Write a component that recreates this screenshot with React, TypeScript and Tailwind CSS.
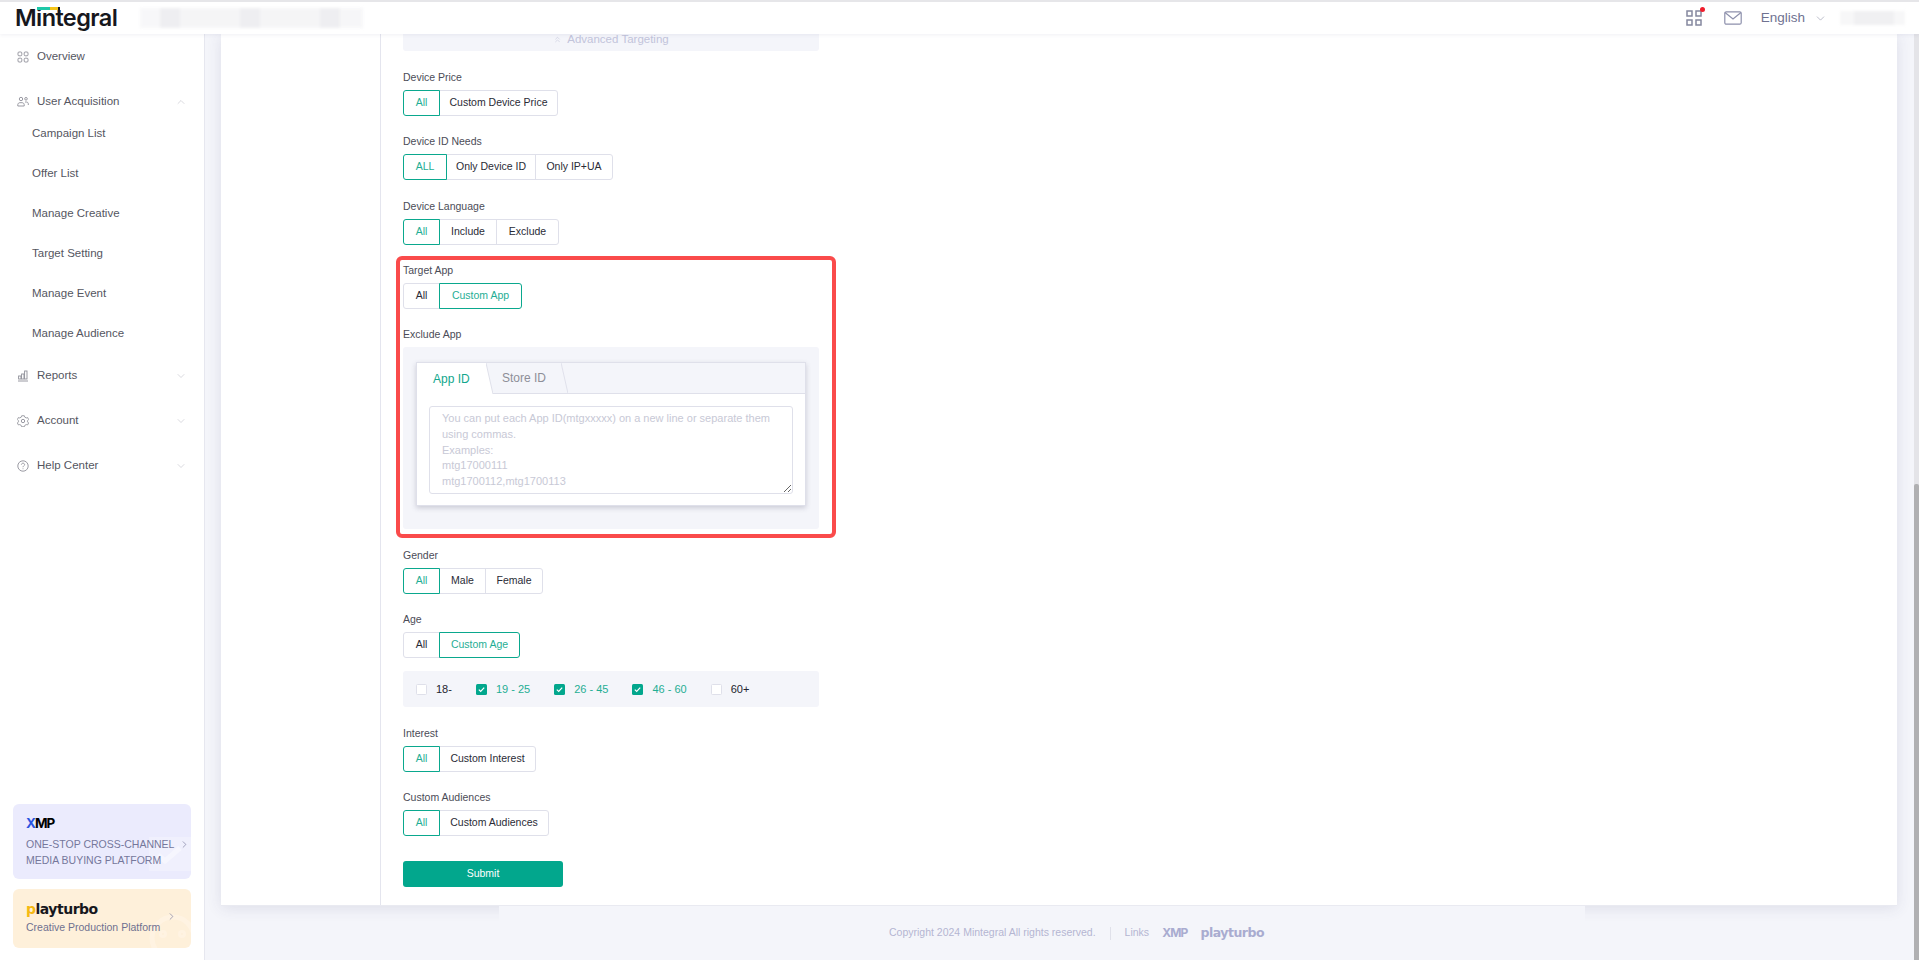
import React from "react";
import { ChevronDown, ChevronRight, ChevronUp, ChevronsUp } from "lucide-react";

const FONT = "[font-family:'Liberation_Sans','Noto_Sans_CJK_SC',sans-serif]";

type Opt = { t: string; w: number; on?: boolean };

function Segments({ opts }: { opts: Opt[] }) {
  return (
    <div className="flex h-[26px]">
      {opts.map((o, i) => (
        <div
          key={o.t}
          style={{ width: o.w }}
          className={
            "flex items-center justify-center text-[10.5px] font-medium border whitespace-nowrap " +
            (o.on
              ? "border-[#0aa88e] text-[#1fae94] relative z-[1] "
              : "border-[#dfe0ea] text-[#2a2b36] ") +
            (i > 0 ? "-ml-px " : "") +
            (i === 0 ? "rounded-l-[3px] " : "") +
            (i === opts.length - 1 ? "rounded-r-[3px]" : "")
          }
        >
          {o.t}
        </div>
      ))}
    </div>
  );
}

function Field({ label, opts, className = "" }: { label: string; opts: Opt[]; className?: string }) {
  return (
    <div className={className}>
      <div className="h-[13px] leading-[13px] text-[10.5px] text-[#4b4c57] mb-[6px]">{label}</div>
      <Segments opts={opts} />
    </div>
  );
}

function Check({ label, on }: { label: string; on?: boolean }) {
  return (
    <div className="flex items-center gap-[9px]">
      {on ? (
        <span className="w-[11px] h-[11px] rounded-[1.5px] bg-[#02a78d] flex items-center justify-center">
          <svg width="9" height="9" viewBox="0 0 9 9" fill="none">
            <path d="M1.8 4.6 3.7 6.4 7.2 2.6" stroke="#fff" strokeWidth="1.2" />
          </svg>
        </span>
      ) : (
        <span className="w-[11px] h-[11px] rounded-[1.5px] bg-white border border-[#dfe0ea]" />
      )}
      <span className={"text-[11px] " + (on ? "text-[#1fae94]" : "text-[#23242e]")}>{label}</span>
    </div>
  );
}

const iconCls = "w-[12px] h-[12px] shrink-0 text-[#8e8f98]";

function IconOverview() {
  return (
    <svg className={iconCls} viewBox="0 0 12 12" fill="none" stroke="currentColor" strokeWidth="0.9">
      <rect x="1" y="1" width="3.8" height="3.8" rx="1" />
      <rect x="7.2" y="1" width="3.8" height="3.8" rx="1" />
      <rect x="1" y="7.2" width="3.8" height="3.8" rx="1" />
      <rect x="7.2" y="7.2" width="3.8" height="3.8" rx="1" />
    </svg>
  );
}
function IconUsers() {
  return (
    <svg className={iconCls} viewBox="0 0 12 12" fill="none" stroke="currentColor" strokeWidth="0.9">
      <circle cx="4" cy="3" r="1.7" />
      <circle cx="9" cy="2.8" r="1.3" />
      <path d="M0.8 10V8.6c0-1.1 1-1.9 2.2-1.9h2c1.2 0 2.2.8 2.2 1.9V10z" />
      <path d="M8 6h1.4c1 0 1.9.7 1.9 1.7V9" />
    </svg>
  );
}
function IconReports() {
  return (
    <svg className={iconCls} viewBox="0 0 12 12" fill="none" stroke="currentColor" strokeWidth="0.9">
      <path d="M1 11h10" />
      <rect x="1.6" y="6" width="2.4" height="3" />
      <rect x="4.6" y="4" width="2.4" height="5" />
      <rect x="7.6" y="1" width="2.4" height="8" />
    </svg>
  );
}
function IconGear() {
  return (
    <svg className={iconCls} viewBox="0 0 12 12" fill="none" stroke="currentColor" strokeWidth="0.9">
      <path d="M4.6 0.8h2.8l.5 1.5 1.5.8 1.5-.4 1 2.1-1.1 1.2 0 1.2 1.1 1.2-1 2-1.5-.3-1.5.8-.5 1.5H4.6l-.5-1.5-1.5-.8-1.5.3-1-2 1.1-1.2 0-1.2L.1 4.8l1-2.1 1.5.4 1.5-.8z" transform="translate(0.3 0) scale(0.95)" />
      <circle cx="6" cy="6" r="1.7" />
    </svg>
  );
}
function IconHelp() {
  return (
    <svg className={iconCls} viewBox="0 0 12 12" fill="none" stroke="currentColor" strokeWidth="0.9">
      <circle cx="6" cy="6" r="5.2" />
      <path d="M4.4 4.7c0-.9.7-1.5 1.6-1.5s1.6.6 1.6 1.4c0 1.2-1.6 1.3-1.6 2.6" />
      <path d="M6 8.4v.8" />
    </svg>
  );
}

function NavTop({ label, icon, open, className = "" }: { label: string; icon: React.ReactNode; open?: boolean; className?: string }) {
  return (
    <div className={"flex items-center h-[20px] pl-[17px] pr-[17px] " + className}>
      {icon}
      <span className="ml-[8px] text-[11.5px] text-[#55565f]">{label}</span>
      {open === undefined ? null : open ? (
        <ChevronUp className="ml-auto text-[#b4b5bf]" size={12} strokeWidth={1} />
      ) : (
        <ChevronDown className="ml-auto text-[#b4b5bf]" size={12} strokeWidth={1} />
      )}
    </div>
  );
}

function NavSub({ label }: { label: string }) {
  return <div className="h-[40px] flex items-center pl-[32px] text-[11.5px] text-[#55565f]">{label}</div>;
}

export default function App() {
  return (
    <div className={"h-[960px] w-full overflow-hidden flex flex-col bg-[#f4f5fa] " + FONT}>
      {/* header */}
      <header className="relative z-20 h-[34px] bg-white border-t-[2px] border-[#e6e6e9] shadow-[0_1px_4px_rgba(60,60,110,0.08)] flex items-center shrink-0">
        <div className="relative ml-[15px] w-[106px] h-[32px] flex items-center">
          <span className="[font-family:Inter,sans-serif] text-[23.5px] font-semibold tracking-[-0.6px] text-[#16171d] leading-none">Mintegral</span>
          <span className="absolute left-[22px] top-[5px] flex h-[3px]">
            <span className="w-[13px] bg-[#1ec8a8]" />
            <span className="w-[8px] bg-[#f5c518]" />
            <span className="w-[2px] bg-[#16171d]" />
          </span>
        </div>
        <div className="ml-[19px] w-[223px] h-[20px] flex blur-[1.5px] opacity-80">
          <span className="w-[20px] bg-[#f6f6f8]" />
          <span className="w-[20px] bg-[#ebebee]" />
          <span className="w-[60px] bg-[#f3f3f5]" />
          <span className="w-[20px] bg-[#ebebee]" />
          <span className="w-[60px] bg-[#f3f3f5]" />
          <span className="w-[20px] bg-[#ebebee]" />
          <span className="w-[23px] bg-[#f5f5f7]" />
        </div>
        <div className="ml-auto flex items-center text-[#6f7291]">
          <div className="relative mr-[22px]">
            <svg width="16" height="16" viewBox="0 0 16 16" fill="none" stroke="#85889f" strokeWidth="1.5" className="block">
              <rect x="1" y="1" width="5" height="5" />
              <rect x="10" y="1" width="5" height="5" />
              <rect x="1" y="10" width="5" height="5" />
              <rect x="10" y="10" width="5" height="5" />
            </svg>
            <span className="absolute -top-[3px] -right-[3px] w-[5px] h-[5px] rounded-full bg-[#f01d2c]" />
          </div>
          <svg width="18" height="14" viewBox="0 0 18 14" fill="none" stroke="#8d90ac" strokeWidth="1.2" className="mr-[19px]">
            <rect x="0.8" y="0.8" width="16.4" height="12.4" rx="1.5" />
            <path d="M1 1.5 9 8l8-6.5" />
          </svg>
          <span className="text-[13.5px] leading-none">English</span>
          <ChevronDown className="ml-[9px] text-[#85889f]" size={13} strokeWidth={1} />
          <div className="ml-[13px] mr-[14px] w-[65px] h-[14px] flex blur-[1.5px]">
            <span className="w-[14px] bg-[#f7f7f8]" />
            <span className="w-[40px] bg-[#f0f0f2]" />
            <span className="w-[11px] bg-[#f7f7f8]" />
          </div>
        </div>
      </header>

      <div className="flex flex-1 min-h-0">
        {/* sidebar */}
        <aside className="w-[205px] shrink-0 bg-white border-r border-[#e6e7ef] flex flex-col">
          <NavTop label="Overview" icon={<IconOverview />} className="mt-[13px]" />
          <NavTop label="User Acquisition" icon={<IconUsers />} open className="mt-[25px]" />
          <div className="mt-[2px]">
            <NavSub label="Campaign List" />
            <NavSub label="Offer List" />
            <NavSub label="Manage Creative" />
            <NavSub label="Target Setting" />
            <NavSub label="Manage Event" />
            <NavSub label="Manage Audience" />
          </div>
          <NavTop label="Reports" icon={<IconReports />} open={false} className="mt-[12px]" />
          <NavTop label="Account" icon={<IconGear />} open={false} className="mt-[25px]" />
          <NavTop label="Help Center" icon={<IconHelp />} open={false} className="mt-[25px]" />

          <div className="relative mt-auto mx-[13px] h-[75px] rounded-[6px] bg-[#ebebfd] overflow-hidden pl-[13px] pt-[13px]">
            <svg className="absolute right-0 bottom-0" width="44" height="44" viewBox="0 0 44 44" fill="none">
              <rect x="2" y="2" width="42" height="34" fill="#f0f0fd" />
              <path d="M11 20l7 6 15-13" stroke="#f6f6fe" strokeWidth="5" />
            </svg>
            <div className="relative flex items-center h-[14px] text-[13.5px] font-bold tracking-[-1px] text-black leading-none">
              <span className="[font-family:Inter,sans-serif]"><span className="text-[#2b55e0]">X</span>MP</span>
            </div>
            <div className="relative mt-[5px] text-[10.5px] leading-[16px] text-[#75779b] whitespace-nowrap">
              <div className="flex items-center">
                ONE-STOP CROSS-CHANNEL
                <ChevronRight className="ml-[5px] text-[#75779b]" size={11} strokeWidth={1.4} />
              </div>
              <div>MEDIA BUYING PLATFORM</div>
            </div>
          </div>
          <div className="relative mt-[10px] mb-[12px] mx-[13px] h-[59px] rounded-[6px] bg-[#fef0da] overflow-hidden pl-[13px] pt-[13px]">
            <svg className="absolute right-[-6px] bottom-[-14px]" width="48" height="48" viewBox="0 0 48 48" fill="none" stroke="#fff3e2" strokeWidth="5">
              <circle cx="24" cy="24" r="21" />
              <circle cx="14" cy="20" r="1.5" />
              <circle cx="33" cy="20" r="1.5" />
            </svg>
            <div className="relative h-[14px] leading-[14px] text-[14px] font-bold text-[#16171d] [font-family:'DejaVu_Sans',sans-serif] tracking-[-0.5px]">
              <span className="text-[#f5b914]">p</span>layturbo
            </div>
            <div className="relative mt-[4px] flex items-center text-[10.5px] leading-[14px] text-[#6f7090] whitespace-nowrap">
              Creative Production Platform
              <ChevronRight className="absolute left-[140px] -top-[9px] text-[#75779b]" size={11} strokeWidth={1.4} />
            </div>
          </div>
        </aside>

        {/* main */}
        <main className="flex-1 min-w-0 flex flex-col">
          <div className="ml-[16px] mr-[17px] h-[872px] shrink-0 bg-white shadow-[0_2px_14px_rgba(60,60,110,0.12)] flex relative border-b border-[#e9eaf1]">
            <div className="w-[160px] shrink-0 border-r border-[#e4e5ee]" />
            <div className="pl-[22px] w-[439px]">
              <div className="w-[416px] h-[17px] rounded-b-[3px] bg-[#f4f5fa] flex items-center justify-center gap-[5px] text-[11.5px] leading-[10px] text-[#c2c4da] pb-[7px]">
                <ChevronsUp size={9} strokeWidth={1.5} />
                Advanced Targeting
              </div>
              <Field label="Device Price" className="mt-[20px]" opts={[{ t: "All", w: 37, on: true }, { t: "Custom Device Price", w: 119 }]} />
              <Field label="Device ID Needs" className="mt-[19px]" opts={[{ t: "ALL", w: 44, on: true }, { t: "Only Device ID", w: 90 }, { t: "Only IP+UA", w: 78 }]} />
              <Field label="Device Language" className="mt-[20px]" opts={[{ t: "All", w: 37, on: true }, { t: "Include", w: 58 }, { t: "Exclude", w: 63 }]} />

              <div className="relative mt-[19px]">
                <div className="absolute -left-[7px] -top-[8px] w-[440px] h-[282px] border-[4px] border-[#fa4b4b] rounded-[6px] z-10 pointer-events-none" />
                <Field label="Target App" opts={[{ t: "All", w: 37 }, { t: "Custom App", w: 83, on: true }]} />
                <div className="mt-[19px] h-[13px] leading-[13px] text-[10.5px] text-[#4b4c57] mb-[6px]">Exclude App</div>
                <div className="w-[416px] h-[182px] rounded-[3px] bg-[#f4f5fa] pt-[15px] px-[13px]">
                  <div className="h-[144px] bg-white border border-[#dfe0ea] shadow-[0_2px_5px_rgba(60,60,90,0.22)]">
                    <div className="flex h-[31px]">
                      <div className="w-[69px] bg-white flex items-center pl-[16px] text-[12px] text-[#12a78d]">App ID</div>
                      <svg width="7" height="31" viewBox="0 0 7 31" className="shrink-0 bg-[#f4f5fa]">
                        <polygon points="0,0 7,31 0,31" fill="#fff" />
                        <line x1="0" y1="0" x2="7" y2="31" stroke="#dfe0ea" />
                      </svg>
                      <div className="w-[68px] bg-[#f4f5fa] border-b border-[#dfe0ea] flex items-center pl-[9px] text-[12px] text-[#8e8f98]">Store ID</div>
                      <svg width="7" height="31" viewBox="0 0 7 31" className="shrink-0 bg-[#f4f5fa] border-b border-[#dfe0ea]">
                        <line x1="0" y1="0" x2="7" y2="31" stroke="#dfe0ea" />
                      </svg>
                      <div className="flex-1 bg-[#f4f5fa] border-b border-[#dfe0ea]" />
                    </div>
                    <div className="px-[12px] pt-[12px]">
                      <textarea
                        className="block w-full h-[88px] border border-[#dfe0ea] rounded-[3px] pl-[12px] pr-[12px] pt-[4px] text-[11px] leading-[15.8px] outline-none placeholder:text-[#c8c9d6] overflow-hidden"
                        placeholder={"You can put each App ID(mtgxxxxx) on a new line or separate them using commas.\nExamples:\nmtg17000111\nmtg1700112,mtg1700113"}
                      />
                    </div>
                  </div>
                </div>
              </div>

              <Field label="Gender" className="mt-[20px]" opts={[{ t: "All", w: 37, on: true }, { t: "Male", w: 47 }, { t: "Female", w: 58 }]} />
              <Field label="Age" className="mt-[19px]" opts={[{ t: "All", w: 37 }, { t: "Custom Age", w: 81, on: true }]} />
              <div className="mt-[13px] w-[416px] h-[36px] rounded-[3px] bg-[#f4f5fa] flex items-center pl-[13px] gap-[24px]">
                <Check label="18-" />
                <Check label="19 - 25" on />
                <Check label="26 - 45" on />
                <Check label="46 - 60" on />
                <Check label="60+" />
              </div>
              <Field label="Interest" className="mt-[20px]" opts={[{ t: "All", w: 37, on: true }, { t: "Custom Interest", w: 97 }]} />
              <Field label="Custom Audiences" className="mt-[19px]" opts={[{ t: "All", w: 37, on: true }, { t: "Custom Audiences", w: 110 }]} />
              <button className="mt-[25px] w-[160px] h-[26px] rounded-[3px] bg-[#02a78d] text-white text-[10.5px] font-medium flex items-center justify-center">
                Submit
              </button>
            </div>
          </div>
          <footer className="relative z-[5] ml-[294px] w-[1086px] flex-1 bg-[#f4f5fa] flex items-center pl-[390px] text-[10.5px] text-[#b4b6d2] whitespace-nowrap">
            <span>Copyright 2024 Mintegral All rights reserved.</span>
            <span className="mx-[14px] w-px h-[13px] bg-[#e0e1ea]" />
            <span>Links</span>
            <span className="ml-[13px] [font-family:Inter,sans-serif] text-[12px] font-bold tracking-[-0.8px] text-[#a9acd0]">XMP</span>
            <span className="ml-[13px] [font-family:'DejaVu_Sans',sans-serif] text-[12.5px] font-bold tracking-[-0.5px] text-[#a9acd0]">playturbo</span>
          </footer>
        </main>

        {/* scrollbar */}
        <div className="w-[5px] shrink-0 bg-[#e4e4e8] flex flex-col justify-end">
          <div className="h-[476px] bg-[#b0b0b2] rounded-t-[2px]" />
        </div>
      </div>
    </div>
  );
}
